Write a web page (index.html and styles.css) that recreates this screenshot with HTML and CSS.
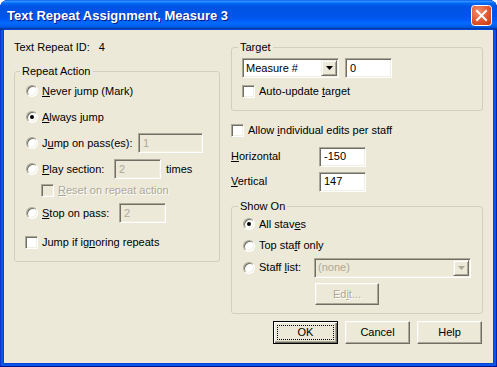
FILE: index.html
```html
<!DOCTYPE html>
<html>
<head>
<meta charset="utf-8">
<link rel="stylesheet" href="styles.css">
</head>
<body>
<div class="window">
  <div class="titlebar">
    <span class="title">Text Repeat Assignment, Measure 3</span>
    <span class="close">
      <svg width="21" height="21" viewBox="0 0 21 21">
        <defs>
          <radialGradient id="cg" cx="0.35" cy="0.3" r="0.9">
            <stop offset="0" stop-color="#F0906C"/>
            <stop offset="0.55" stop-color="#E2572F"/>
            <stop offset="1" stop-color="#C23A10"/>
          </radialGradient>
        </defs>
        <rect x="0.5" y="0.5" width="20" height="20" rx="3" fill="url(#cg)" stroke="#fff"/>
        <path d="M6 6 L15 15 M15 6 L6 15" stroke="#fff" stroke-width="2" stroke-linecap="square"/>
      </svg>
    </span>
  </div>
  <div class="client">
    <div class="columns">
      <div class="col-left">
        <div class="idrow"><span>Text Repeat ID:</span><span class="idval">4</span></div>
        <fieldset class="group">
          <legend>Repeat Action</legend>
          <div class="row h26"><span class="radio"></span><span><u>N</u>ever jump (Mark)</span></div>
          <div class="row h26"><span class="radio on"></span><span><u>A</u>lways jump</span></div>
          <div class="row h26"><span class="radio"></span><span class="lbl w96">J<u>u</u>mp on pass(es):</span><span class="edit dis w65">1</span></div>
          <div class="row h26"><span class="radio"></span><span class="lbl w72"><u>P</u>lay section:</span><span class="edit dis w47">2</span><span class="times">times</span></div>
          <div class="row h16 indent"><span class="check dis"></span><span class="distext"><u>R</u>eset on repeat action</span></div>
          <div class="row h30"><span class="radio"></span><span class="lbl w77"><u>S</u>top on pass:</span><span class="edit dis w47">2</span></div>
          <div class="row h28"><span class="check"></span><span>Jump if ig<u>n</u>oring repeats</span></div>
        </fieldset>
      </div>
      <div class="col-right">
        <fieldset class="group target">
          <legend>Target</legend>
          <div class="row trow1">
            <span class="combo w97"><span class="ctext">Measure #</span><span class="dropbtn"><svg width="7" height="4" viewBox="0 0 7 4"><path d="M0 0 H7 L3.5 4 Z" fill="#000"/></svg></span></span>
            <span class="edit w47 gap6">0</span>
          </div>
          <div class="row h27"><span class="check"></span><span>Auto-update <u>t</u>arget</span></div>
        </fieldset>
        <div class="row allow"><span class="check"></span><span>Allow <u>i</u>ndividual edits per staff</span></div>
        <div class="row h25 first"><span class="lbl w88"><u>H</u>orizontal</span><span class="edit w47">-150</span></div>
        <div class="row h25"><span class="lbl w88"><u>V</u>ertical</span><span class="edit w47">147</span></div>
        <fieldset class="group showon">
          <legend>Show On</legend>
          <div class="row h22"><span class="radio on"></span><span>All stav<u>e</u>s</span></div>
          <div class="row h21"><span class="radio"></span><span>Top sta<u>f</u>f only</span></div>
          <div class="row h23"><span class="radio"></span><span class="lbl w55">Staff <u>l</u>ist:</span>
            <span class="combo dis w157"><span class="ctext">(none)</span><span class="dropbtn"><svg width="7" height="4" viewBox="0 0 7 4"><path d="M0 0 H7 L3.5 4 Z" fill="#ACA899"/></svg></span></span>
          </div>
          <div class="row editrow"><span class="btn dis small">Ed<u>i</u>t...</span></div>
        </fieldset>
      </div>
    </div>
    <div class="footer">
      <span class="btn default"><span class="focus">OK</span></span>
      <span class="btn">Cancel</span>
      <span class="btn">Help</span>
    </div>
  </div>
</div>
</body>
</html>
```
FILE: styles.css
```css
html, body {
  margin: 0;
  padding: 0;
  background: #ffffff;
}
body {
  font-family: "Liberation Sans", Arial, sans-serif;
  font-size: 11px;
  line-height: 13px;
  color: #000;
}
.window {
  width: 497px;
  height: 367px;
  background: #0A55EC;
  border-radius: 8px 8px 0 0;
  box-shadow: inset 0 -1px #00138C, inset 1px 0 #0838C8, inset -1px 0 #0024B0;
  display: flex;
  flex-direction: column;
  overflow: hidden;
}
.titlebar {
  height: 30px;
  flex: none;
  display: flex;
  align-items: center;
  justify-content: space-between;
  padding: 0 5px 0 7px;
  background: linear-gradient(to bottom, #0058EE 0%, #3593FF 4%, #288EFF 6%, #127DFF 8%, #036FFC 10%, #0262EE 14%, #0057E5 20%, #0054E3 24%, #0055EB 56%, #005BF5 66%, #026AFE 76%, #0062EF 86%, #0052D6 92%, #0040AB 94%, #003092 100%);
  border-radius: 8px 8px 0 0;
}
.title {
  font-family: "Liberation Sans", Arial, sans-serif;
  font-weight: bold;
  font-size: 13px;
  color: #fff;
  text-shadow: 1px 1px #0A1883;
  padding-top: 1px;
}
.close {
  width: 21px;
  height: 21px;
  display: block;
  margin-top: 1px;
}
.close svg { display: block; }
.client {
  flex: none;
  height: 333px;
  margin: 0 4px;
  background: #ECE9D8;
  padding: 0 10px;
  box-shadow: 0 0 0 1px #0843D8;
}
.columns {
  display: flex;
  gap: 11px;
}
.col-left { width: 206px; flex: none; }
.col-right { width: 252px; flex: none; }
.idrow {
  margin-top: 11px;
  height: 13px;
}
.idval { margin-left: 9px; }
.group {
  margin: 11px 0 0 0;
  padding: 0 0 5px 0;
  border: 1px solid #D0D0BF;
  border-radius: 3px;
  min-width: 0;
}
.group legend {
  padding: 0 2px;
  margin-left: 5px;
  line-height: 13px;
  height: 13px;
}
.col-right .group legend { margin-left: 6px; }
.row {
  display: flex;
  align-items: center;
  white-space: nowrap;
}
.group .row { padding-left: 10px; }
.group .row.indent { padding-left: 26px; }
.h16 { height: 16px; }
.h21 { height: 21px; }
.h22 { height: 22px; }
.h23 { height: 23px; }
.h25 { height: 25px; }
.h26 { height: 26px; }
.h27 { height: 27px; }
.h28 { height: 28px; }
.h30 { height: 30px; }
.lbl { display: inline-block; flex: none; }
.w55 { width: 55px; }
.w72 { width: 72px; }
.w77 { width: 77px; }
.w88 { width: 88px; }
.w96 { width: 96px; }
.radio {
  flex: none;
  box-sizing: border-box;
  width: 12px;
  height: 12px;
  margin: 0 4px 0 1px;
  border-radius: 50%;
  border: 1px solid;
  border-color: #ACA899 #FFFFFF #FFFFFF #ACA899;
  box-shadow: inset 1px 1px #716F64, inset -1px -1px #F1EFE2;
  background: #fff;
  position: relative;
}
.radio.on::after {
  content: "";
  position: absolute;
  left: 3px;
  top: 3px;
  width: 4px;
  height: 4px;
  border-radius: 50%;
  background: #000;
}
.check {
  flex: none;
  box-sizing: border-box;
  width: 13px;
  height: 13px;
  margin-right: 4px;
  border: 1px solid;
  border-color: #ACA899 #FFFFFF #FFFFFF #ACA899;
  box-shadow: inset 1px 1px #716F64, inset -1px -1px #F1EFE2;
  background: #fff;
}
.check.dis { background: #ECE9D8; }
.distext {
  color: #ACA899;
  text-shadow: 1px 1px #fff;
}
.edit {
  flex: none;
  box-sizing: border-box;
  height: 20px;
  border: 1px solid;
  border-color: #ACA899 #FFFFFF #FFFFFF #ACA899;
  box-shadow: inset 1px 1px #716F64, inset -1px -1px #F1EFE2;
  background: #fff;
  padding: 0 0 0 4px;
  display: flex;
  align-items: center;
}
.edit.dis {
  background: #ECE9D8;
  color: #ACA899;
}
.w47 { width: 47px; }
.w65 { width: 65px; }
.w97 { width: 97px; }
.w157 { width: 157px; }
.gap6 { margin-left: 6px; }
.times { margin-left: 5px; }
.trow1 { margin-top: 4px; height: 20px; }
.combo {
  flex: none;
  box-sizing: border-box;
  height: 20px;
  border: 1px solid;
  border-color: #ACA899 #FFFFFF #FFFFFF #ACA899;
  box-shadow: inset 1px 1px #716F64, inset -1px -1px #F1EFE2;
  background: #fff;
  padding: 1px;
  display: flex;
  align-items: stretch;
}
.combo.dis { background: #ECE9D8; color: #ACA899; }
.ctext {
  flex: 1;
  padding-left: 2px;
  display: flex;
  align-items: center;
}
.dropbtn {
  flex: none;
  width: 16px;
  box-sizing: border-box;
  border: 1px solid;
  border-color: #F1EFE2 #716F64 #716F64 #F1EFE2;
  box-shadow: inset 1px 1px #fff, inset -1px -1px #ACA899;
  background: #ECE9D8;
  display: flex;
  align-items: center;
  justify-content: center;
}
.dropbtn svg { display: block; }
.allow { margin-top: 9px; height: 20px; }
.first { margin-top: 4px; }
.showon { margin-top: 6px; padding-bottom: 8px; }
.editrow { margin-top: 4px; height: 22px; }
.btn {
  flex: none;
  box-sizing: border-box;
  width: 65px;
  height: 23px;
  border: 1px solid;
  border-color: #FFFFFF #716F64 #716F64 #FFFFFF;
  box-shadow: inset -1px -1px #ACA899, inset 1px 1px #F1EFE2;
  background: #ECE9D8;
  display: flex;
  align-items: center;
  justify-content: center;
}
.btn.small {
  width: 64px;
  height: 22px;
  margin-left: 73px;
}
.btn.dis {
  color: #ACA899;
  text-shadow: 1px 1px #fff;
}
.btn.default {
  border: 1px solid #000;
  box-shadow: inset 1px 1px #fff, inset -1px -1px #716F64, inset -2px -2px #ACA899;
  padding: 3px;
}
.focus {
  flex: 1;
  align-self: stretch;
  border: 1px dotted #000;
  display: flex;
  align-items: center;
  justify-content: center;
}
.footer {
  display: flex;
  justify-content: flex-end;
  gap: 7px;
  margin-top: 7px;
  padding-right: 1px;
}
```
